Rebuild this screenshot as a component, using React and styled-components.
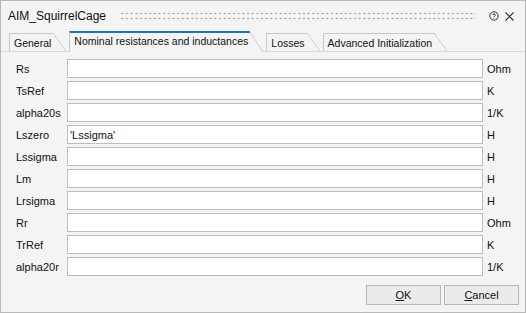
import React from 'react'
import styled, { createGlobalStyle } from 'styled-components'

const GlobalStyle = createGlobalStyle`
  *, *::before, *::after { box-sizing: border-box; }
  html, body { margin: 0; padding: 0; background: #f4f4f4; }
  body { font-family: "Liberation Sans", Arial, sans-serif; }
`

const Window = styled.div`
  width: 526px;
  height: 313px;
  border: 1px solid #b9b9b9;
  background: #f4f4f4;
  display: flex;
  flex-direction: column;
  color: #111;
  font-size: 11px;
`

const TitleBar = styled.div`
  height: 30px;
  display: flex;
  align-items: center;
  padding: 0 11px 0 7px;
`

const Title = styled.span`
  font-size: 12px;
  margin-right: 14px;
`

const Grip = styled.div`
  flex: 1;
  height: 10px;
  margin-right: 13px;
  background-image: radial-gradient(circle, #8e8e8e 0 0.75px, transparent 1.05px);
  background-size: 4.67px 5px;
  background-position: 0 0;
`

const IconButton = styled.span`
  display: flex;
  align-items: center;
  margin-left: ${p => p.$gap || 0}px;
  color: #333;
`

const TabBar = styled.div`
  height: 21px;
  display: flex;
  align-items: flex-end;
  padding-left: 8px;
  border-bottom: 1px solid #dadada;
`

const Tab = styled.div`
  position: relative;
  height: ${p => (p.$active ? 21 : 18)}px;
  margin-bottom: ${p => (p.$active ? -1 : 0)}px;
  margin-right: 16px;
  padding: ${p => (p.$active ? 2 : 3)}px 2px 0 4px;
  border-left: 1px solid #c9c9c9;
  border-top: ${p => (p.$active ? '2px solid #1c78ae' : '1px solid #c9c9c9')};
  background: #f4f4f4;
  white-space: nowrap;
  font-size: 10.5px;

  &::after {
    content: '';
    position: absolute;
    left: 100%;
    top: -1px;
    bottom: 0;
    width: 13px;
    background: linear-gradient(
      to top right,
      #f4f4f4 0,
      #f4f4f4 calc(50% - 0.7px),
      #c9c9c9 50%,
      transparent calc(50% + 0.7px)
    );
  }
`

const Form = styled.div`
  display: grid;
  grid-template-columns: 51px 416px 1fr;
  grid-auto-rows: 19px;
  row-gap: 3px;
  padding: 7px 0 0 15px;
  align-items: center;
`

const Label = styled.span`
  white-space: nowrap;
`

const Field = styled.input`
  height: 19px;
  width: 100%;
  margin: 0;
  border: 1px solid #bdbdbd;
  background: #fff;
  padding: 0 2px;
  font: inherit;
  color: #111;
  outline: none;
`

const Unit = styled.span`
  padding-left: 4px;
`

const Footer = styled.div`
  margin-top: auto;
  display: flex;
  justify-content: flex-end;
  gap: 3px;
  padding: 0 6px 7px 0;
`

const Button = styled.button`
  width: 75px;
  height: 20px;
  border: 1px solid #b6b6b6;
  background: #ebebeb;
  font: inherit;
  color: #111;
  padding: 0;
  u { text-decoration: underline; text-underline-offset: 1px; }
`

const params = [
  { name: 'Rs', unit: 'Ohm' },
  { name: 'TsRef', unit: 'K' },
  { name: 'alpha20s', unit: '1/K' },
  { name: 'Lszero', unit: 'H', value: "'Lssigma'" },
  { name: 'Lssigma', unit: 'H' },
  { name: 'Lm', unit: 'H' },
  { name: 'Lrsigma', unit: 'H' },
  { name: 'Rr', unit: 'Ohm' },
  { name: 'TrRef', unit: 'K' },
  { name: 'alpha20r', unit: '1/K' },
]

const tabs = ['General', 'Nominal resistances and inductances', 'Losses', 'Advanced Initialization']

function HelpIcon() {
  return (
    <svg width="10" height="10" viewBox="0 0 10 10" fill="none" stroke="currentColor" strokeWidth="1">
      <circle cx="5" cy="5" r="4.2" />
      <path d="M3.6 4 C3.6 2.6 6.4 2.6 6.4 4 C6.4 5 5 4.9 5 6.1" />
      <circle cx="5" cy="7.4" r="0.5" fill="currentColor" stroke="none" />
    </svg>
  )
}

function CloseIcon() {
  return (
    <svg width="9" height="9" viewBox="0 0 9 9" stroke="currentColor" strokeWidth="1.1">
      <path d="M0.5 0.5 L8.5 8.5 M8.5 0.5 L0.5 8.5" />
    </svg>
  )
}

export default function App() {
  return (
    <>
      <GlobalStyle />
      <Window>
        <TitleBar>
          <Title>AIM_SquirrelCage</Title>
          <Grip />
          <IconButton><HelpIcon /></IconButton>
          <IconButton $gap={6}><CloseIcon /></IconButton>
        </TitleBar>
        <TabBar>
          {tabs.map((t, i) => (
            <Tab key={t} $active={i === 1}>{t}</Tab>
          ))}
        </TabBar>
        <Form>
          {params.map(p => (
            <React.Fragment key={p.name}>
              <Label>{p.name}</Label>
              <Field defaultValue={p.value || ''} />
              <Unit>{p.unit}</Unit>
            </React.Fragment>
          ))}
        </Form>
        <Footer>
          <Button><u>O</u>K</Button>
          <Button><u>C</u>ancel</Button>
        </Footer>
      </Window>
    </>
  )
}
